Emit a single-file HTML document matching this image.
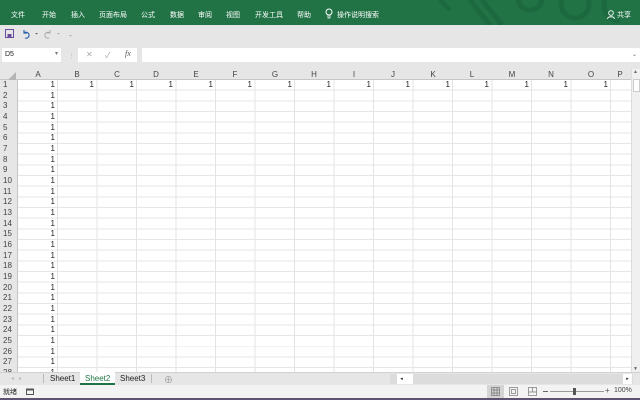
<!DOCTYPE html>
<html><head><meta charset="utf-8"><style>
*{margin:0;padding:0;box-sizing:border-box}
body{width:640px;height:400px;overflow:hidden;position:relative;background:#fff;font-family:"Liberation Sans","Noto Sans CJK SC",sans-serif;font-size:8px;color:#222}
.a{position:absolute}
#rib{left:0;top:0;width:640px;height:25px;background:#217346;color:#fff;font-size:7px}
#rib span{position:absolute;top:10px}
#gray{left:0;top:25px;width:640px;height:45px;background:#e6e6e6}
.box{background:#fff;height:14px;top:48px}
#colh{left:0;top:69px;width:631px;height:11px;background:#e6e6e6;border-bottom:1px solid #c6c6c6}
#colh span{position:absolute;top:1px;font-size:8px;color:#444;width:40px;text-align:center}
#rowh{left:0;top:80px;width:18px;height:293px;background:#e6e6e6;border-right:1px solid #c6c6c6;font-size:8px;line-height:10.67px;color:#444;padding-left:3px}
#grid{left:18px;top:80px;width:613px;height:293px;background:
repeating-linear-gradient(to bottom,transparent 0,transparent 9.67px,#e6e6e6 9.67px,#e6e6e6 10.67px),
repeating-linear-gradient(to right,transparent 0,transparent 38.5px,#e3e3e3 38.5px,#e3e3e3 39.5px)}
#grid{background-position:0 0, 0.5px 0}
#colA{left:18px;top:80px;width:37px;text-align:right;line-height:10.67px;font-size:8px}
.r1{position:absolute;top:80px;font-size:8px;line-height:10.67px;width:10px;text-align:right}
#vs{left:631px;top:69px;width:9px;height:304px;background:#f0f0f0;border-left:1px solid #ddd}
#tabs{left:0;top:372px;width:640px;height:13px;background:#e6e6e6;border-top:1px solid #d0d0d0}
#status{left:0;top:385px;width:640px;height:13px;background:#f3f3f3;font-size:7px}
#bot{left:0;top:398px;width:640px;height:2px;background:#5c5470}
</style></head><body>
<div id="rib" class="a">
<svg class="a" style="left:380px;top:0" width="240" height="25"><g fill="none" stroke="#1c6940" stroke-width="5"><circle cx="195" cy="4" r="14"/><circle cx="150" cy="-2" r="12"/><path d="M90 0 L110 25 M102 0 L122 25 M60 0 L70 10"/><circle cx="240" cy="5" r="16"/></g></svg>
<span style="left:11px">文件</span><span style="left:42px">开始</span><span style="left:71px">插入</span><span style="left:99px">页面布局</span><span style="left:141px">公式</span><span style="left:170px">数据</span><span style="left:198px">审阅</span><span style="left:226px">视图</span><span style="left:255px">开发工具</span><span style="left:297px">帮助</span>
<svg class="a" style="left:325px;top:8px" width="8" height="11"><circle cx="4" cy="4" r="3" fill="none" stroke="#fff" stroke-width="1"/><path d="M3 7v3h2v-3" stroke="#fff" fill="none" stroke-width="0.8"/></svg>
<span style="left:337px">操作说明搜索</span>
<svg class="a" style="left:607px;top:10px" width="8" height="9"><circle cx="4" cy="3" r="2.3" fill="none" stroke="#fff" stroke-width="0.9"/><path d="M0.5 9c0-3 7-3 7 0" fill="none" stroke="#fff" stroke-width="0.9"/></svg>
<span style="left:617px">共享</span>
</div>
<div id="gray" class="a"></div>
<svg class="a" style="left:5px;top:29px" width="70" height="10"><rect x="0.5" y="0.5" width="8" height="8" fill="none" stroke="#6a4c9c"/><rect x="2.5" y="5" width="4" height="3.5" fill="#6a4c9c"/><path d="M19 4 a3 3 0 1 1 1 5 M19 1v3h3" fill="none" stroke="#2f63a8" stroke-width="1.2"/><path d="M30 4l1.5 1.5 1.5-1.5" fill="#666"/><path d="M45 4a3 3 0 1 0 -1 5 M45 1v3h-3" fill="none" stroke="#aaa" stroke-width="1"/><path d="M52 4l1.5 1.5 1.5-1.5M64 6l1.5 1.5 1.5-1.5" fill="#aaa"/></svg>
<div class="a box" style="left:2px;width:59px;font-size:7px;padding:3px 0 0 3px">D5<span style="position:absolute;right:3px;top:2px;color:#777;font-size:6px">▾</span></div>
<div class="a" style="left:68px;top:52px;color:#bbb;font-size:7px">⋮</div>
<div class="a box" style="left:78px;width:59px;color:#aaa;font-size:8px"><span class="a" style="left:8px;top:2px">✕</span><span class="a" style="left:27px;top:2px">✓</span><span class="a" style="left:47px;top:1px;color:#555;font-style:italic;font-family:'Liberation Serif',serif">fx</span></div>
<div class="a box" style="left:142px;width:498px"><span class="a" style="right:3px;top:3px;color:#666;font-size:6px">⌄</span></div>
<div id="colh" class="a">
<svg class="a" style="left:8px;top:3px" width="8" height="8"><path d="M8 0V8H0Z" fill="#b5b5b5"/></svg>
<span style="left:18px">A</span><span style="left:57px">B</span><span style="left:97px">C</span><span style="left:136px">D</span><span style="left:176px">E</span><span style="left:215px">F</span><span style="left:255px">G</span><span style="left:294px">H</span><span style="left:334px">I</span><span style="left:373px">J</span><span style="left:413px">K</span><span style="left:452px">L</span><span style="left:492px">M</span><span style="left:531px">N</span><span style="left:571px">O</span><span style="left:605px;width:30px">P</span>
</div>
<div id="grid" class="a"></div>
<div id="rowh" class="a">1<br>2<br>3<br>4<br>5<br>6<br>7<br>8<br>9<br>10<br>11<br>12<br>13<br>14<br>15<br>16<br>17<br>18<br>19<br>20<br>21<br>22<br>23<br>24<br>25<br>26<br>27<br>28</div>
<div id="colA" class="a">1<br>1<br>1<br>1<br>1<br>1<br>1<br>1<br>1<br>1<br>1<br>1<br>1<br>1<br>1<br>1<br>1<br>1<br>1<br>1<br>1<br>1<br>1<br>1<br>1<br>1<br>1<br>1</div>
<div class="r1" style="left:84px">1</div><div class="r1" style="left:124px">1</div><div class="r1" style="left:163px">1</div><div class="r1" style="left:203px">1</div><div class="r1" style="left:242px">1</div><div class="r1" style="left:282px">1</div><div class="r1" style="left:321px">1</div><div class="r1" style="left:361px">1</div><div class="r1" style="left:400px">1</div><div class="r1" style="left:440px">1</div><div class="r1" style="left:479px">1</div><div class="r1" style="left:519px">1</div><div class="r1" style="left:558px">1</div><div class="r1" style="left:598px">1</div>
<div id="vs" class="a"><div class="a" style="left:1px;top:10px;width:7px;height:13px;background:#fff;border:1px solid #ccc"></div><span class="a" style="left:1px;top:0;font-size:5px;color:#666">▲</span><span class="a" style="left:1px;bottom:1px;font-size:5px;color:#666">▼</span></div>
<div id="tabs" class="a">
<span class="a" style="left:11px;top:2px;color:#bbb;font-size:6px">◂ &nbsp; ▸</span>
<div class="a" style="left:43px;top:1px;width:1px;height:9px;background:#bbb"></div>
<span class="a" style="left:50px;top:1px">Sheet1</span>
<div class="a" style="left:80px;top:-1px;width:35px;height:13px;background:#fff;border-bottom:2px solid #217346;color:#217346;padding:2px 0 0 5px">Sheet2</div>
<span class="a" style="left:120px;top:1px">Sheet3</span>
<div class="a" style="left:151px;top:1px;width:1px;height:9px;background:#bbb"></div>
<span class="a" style="left:164px;top:0;color:#999;font-size:9px">⊕</span>
<div class="a" style="left:390px;top:1px;width:243px;height:10px;background:#dcdcdc"></div>
<div class="a" style="left:397px;top:1px;width:9px;height:10px;background:#fff;font-size:5px;text-align:center;line-height:10px">◂</div>
<div class="a" style="left:405px;top:1px;width:8px;height:10px;background:#fff"></div>
<div class="a" style="left:623px;top:1px;width:9px;height:10px;background:#fff;font-size:5px;text-align:center;line-height:10px">▸</div>
</div>
<div id="status" class="a">
<span class="a" style="left:3px;top:2px">就绪</span>
<svg class="a" style="left:26px;top:3px" width="8" height="7"><rect x="0.5" y="1" width="7" height="5.5" fill="none" stroke="#555"/><rect x="0.5" y="1" width="7" height="1.5" fill="#555"/></svg>
<div class="a" style="left:487px;top:0;width:17px;height:13px;background:#d4d4d4"></div>
<svg class="a" style="left:491px;top:2px" width="80" height="9"><g fill="none" stroke="#777" stroke-width="0.7"><rect x="0.5" y="0.5" width="8" height="8"/><path d="M3 0.5v8M6 0.5v8M0.5 3h8M0.5 6h8"/><rect x="18.5" y="0.5" width="8" height="8"/><rect x="20.5" y="2.5" width="4" height="4"/><rect x="37.5" y="0.5" width="8" height="8"/><path d="M37.5 5h8M41.5 0.5v4.5"/></g><path d="M52 4.5h5" stroke="#666"/></svg>
<div class="a" style="left:550px;top:6px;width:54px;height:1px;background:#999"></div>
<div class="a" style="left:573px;top:3px;width:3px;height:7px;background:#555"></div>
<span class="a" style="left:605px;top:1px;font-size:8px;color:#555">+</span>
<span class="a" style="left:614px;top:2px;color:#444">100%</span>
</div>
<div id="bot" class="a"></div>
</body></html>
